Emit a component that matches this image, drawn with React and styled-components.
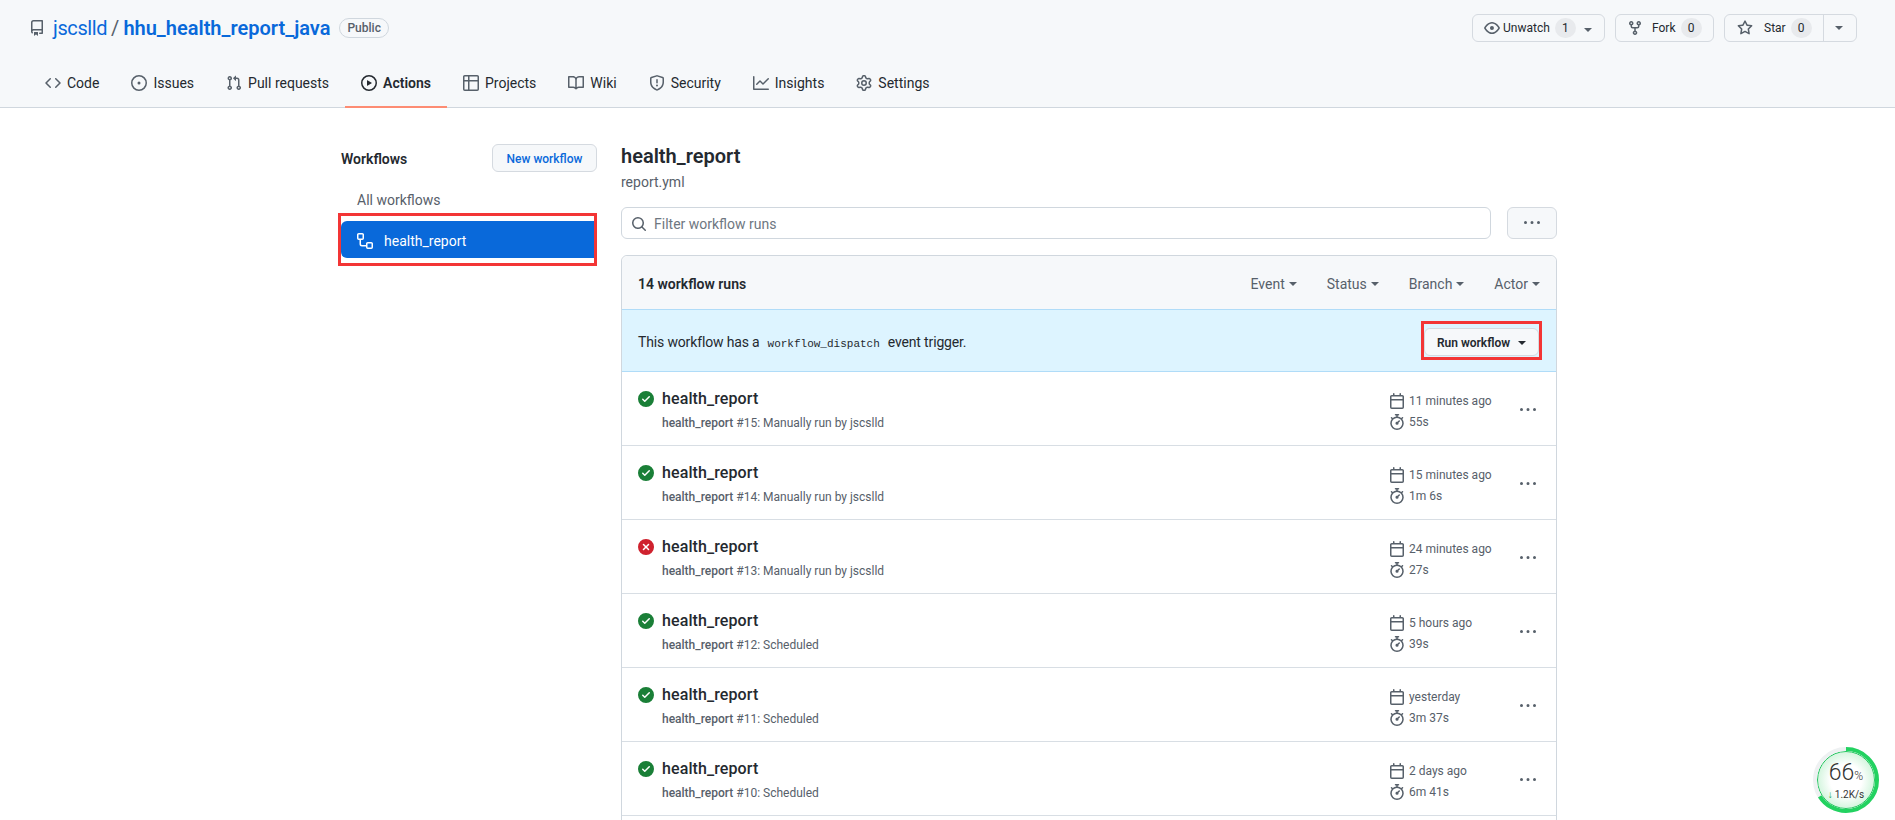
import React from 'react'
import styled, { createGlobalStyle } from 'styled-components'

const GlobalStyle = createGlobalStyle`
  html, body {
    background: #fff;
    height: 820px;
    margin: 0;
    overflow: hidden;
  }

  body {
    color: #24292f;
    font-family: Roboto, 'Liberation Sans', sans-serif;
    font-size: 14px;
  }

  * {
    box-sizing: border-box;
  }
`

const paths = {
  repo: 'M2 2.5A2.5 2.5 0 014.5 0h8.75a.75.75 0 01.75.75v12.5a.75.75 0 01-.75.75h-2.5a.75.75 0 110-1.5h1.75v-2h-8a1 1 0 00-.714 1.7.75.75 0 01-1.072 1.05A2.495 2.495 0 012 11.5v-9zm10.5-1V9h-8c-.356 0-.694.074-1 .208V2.5a1 1 0 011-1h8zM5 12.25v3.25a.25.25 0 00.4.2l1.45-1.087a.25.25 0 01.3 0L8.6 15.7a.25.25 0 00.4-.2v-3.25a.25.25 0 00-.25-.25h-3.5a.25.25 0 00-.25.25z',
  code: 'm11.28 3.22 4.25 4.25a.75.75 0 0 1 0 1.06l-4.25 4.25a.749.749 0 0 1-1.275-.326.749.749 0 0 1 .215-.734L13.94 8l-3.72-3.72a.749.749 0 0 1 .326-1.275.749.749 0 0 1 .734.215Zm-6.56 0a.751.751 0 0 1 1.042.018.751.751 0 0 1 .018 1.042L2.06 8l3.72 3.72a.749.749 0 0 1-.326 1.275.749.749 0 0 1-.734-.215L.47 8.53a.75.75 0 0 1 0-1.06Z',
  issue: 'M8 9.5a1.5 1.5 0 1 0 0-3 1.5 1.5 0 0 0 0 3ZM8 0a8 8 0 1 1 0 16A8 8 0 0 1 8 0ZM1.5 8a6.5 6.5 0 1 0 13 0 6.5 6.5 0 0 0-13 0Z',
  pull: 'M1.5 3.25a2.25 2.25 0 1 1 3 2.122v5.256a2.251 2.251 0 1 1-1.5 0V5.372A2.25 2.25 0 0 1 1.5 3.25Zm5.677-.177L9.573.677A.25.25 0 0 1 10 .854V2.5h1A2.5 2.5 0 0 1 13.5 5v5.628a2.251 2.251 0 1 1-1.5 0V5a1 1 0 0 0-1-1h-1v1.646a.25.25 0 0 1-.427.177L7.177 3.427a.25.25 0 0 1 0-.354ZM3.75 2.5a.75.75 0 1 0 0 1.5.75.75 0 0 0 0-1.5Zm0 9.5a.75.75 0 1 0 0 1.5.75.75 0 0 0 0-1.5Zm8.25.75a.75.75 0 1 0 1.5 0 .75.75 0 0 0-1.5 0Z',
  play: 'M8 0a8 8 0 1 1 0 16A8 8 0 0 1 8 0ZM1.5 8a6.5 6.5 0 1 0 13 0 6.5 6.5 0 0 0-13 0Zm4.879-2.773 4.264 2.559a.25.25 0 0 1 0 .428l-4.264 2.559A.25.25 0 0 1 6 10.559V5.442a.25.25 0 0 1 .379-.215Z',
  table: 'M0 1.75C0 .784.784 0 1.75 0h12.5C15.216 0 16 .784 16 1.75v12.5A1.75 1.75 0 0 1 14.25 16H1.75A1.75 1.75 0 0 1 0 14.25ZM6.5 6.5v8h7.75a.25.25 0 0 0 .25-.25V6.5Zm8-1.5V1.75a.25.25 0 0 0-.25-.25H6.5V5Zm-13 1.5v7.75c0 .138.112.25.25.25H5v-8ZM5 5V1.5H1.75a.25.25 0 0 0-.25.25V5Z',
  book: 'M0 1.75A.75.75 0 0 1 .75 1h4.253c1.227 0 2.317.59 3 1.501A3.743 3.743 0 0 1 11.006 1h4.245a.75.75 0 0 1 .75.75v10.5a.75.75 0 0 1-.75.75h-4.507a2.25 2.25 0 0 0-1.591.659l-.622.621a.75.75 0 0 1-1.06 0l-.622-.621A2.25 2.25 0 0 0 5.258 13H.75a.75.75 0 0 1-.75-.75Zm7.251 10.324.004-5.073-.002-2.253A2.25 2.25 0 0 0 5.003 2.5H1.5v9h3.757a3.75 3.75 0 0 1 1.994.574ZM8.755 4.75l-.004 7.322a3.752 3.752 0 0 1 1.992-.572H14.5v-9h-3.495a2.25 2.25 0 0 0-2.25 2.25Z',
  shield: 'M7.467.133a1.748 1.748 0 0 1 1.066 0l5.25 1.68A1.75 1.75 0 0 1 15 3.48V7c0 1.566-.32 3.182-1.303 4.682-.983 1.498-2.585 2.813-5.032 3.855a1.697 1.697 0 0 1-1.33 0c-2.447-1.042-4.049-2.357-5.032-3.855C1.32 10.182 1 8.566 1 7V3.48a1.75 1.75 0 0 1 1.217-1.667Zm.61 1.429a.25.25 0 0 0-.153 0l-5.25 1.68a.25.25 0 0 0-.174.238V7c0 1.358.275 2.666 1.057 3.86.784 1.194 2.121 2.34 4.366 3.297a.196.196 0 0 0 .154 0c2.245-.956 3.582-2.104 4.366-3.298C13.225 9.666 13.5 8.36 13.5 7V3.48a.251.251 0 0 0-.174-.237l-5.25-1.68ZM8.75 4.75v3a.75.75 0 0 1-1.5 0v-3a.75.75 0 0 1 1.5 0ZM9 10.5a1 1 0 1 1-2 0 1 1 0 0 1 2 0Z',
  graph: 'M1.5 1.75V13.5h13.75a.75.75 0 0 1 0 1.5H.75a.75.75 0 0 1-.75-.75V1.75a.75.75 0 0 1 1.5 0Zm14.28 2.53-5.25 5.25a.75.75 0 0 1-1.06 0L7 7.06 4.28 9.78a.751.751 0 0 1-1.042-.018.751.751 0 0 1-.018-1.042l3.25-3.25a.75.75 0 0 1 1.06 0L10 7.94l4.72-4.72a.751.751 0 0 1 1.042.018.751.751 0 0 1 .018 1.042Z',
  gear: 'M8 0a8.2 8.2 0 0 1 .701.031C9.444.095 9.99.645 10.16 1.29l.288 1.107c.018.066.079.158.212.224.231.114.454.243.668.386.123.082.233.09.299.071l1.103-.303c.644-.176 1.392.021 1.82.63.27.385.506.792.704 1.218.315.675.111 1.422-.364 1.891l-.814.806c-.049.048-.098.147-.088.294.016.257.016.515 0 .772-.01.147.038.246.088.294l.814.806c.475.469.679 1.216.364 1.891a7.977 7.977 0 0 1-.704 1.217c-.428.61-1.176.807-1.82.63l-1.102-.302c-.067-.019-.177-.011-.3.071a5.909 5.909 0 0 1-.668.386c-.133.066-.194.158-.211.224l-.29 1.106c-.168.646-.715 1.196-1.458 1.26a8.006 8.006 0 0 1-1.402 0c-.743-.064-1.289-.614-1.458-1.26l-.289-1.106c-.018-.066-.079-.158-.212-.224a5.738 5.738 0 0 1-.668-.386c-.123-.082-.233-.09-.299-.071l-1.103.303c-.644.176-1.392-.021-1.82-.63a8.12 8.12 0 0 1-.704-1.218c-.315-.675-.111-1.422.363-1.891l.815-.806c.05-.048.098-.147.088-.294a6.214 6.214 0 0 1 0-.772c.01-.147-.038-.246-.088-.294l-.815-.806C.635 6.045.431 5.298.746 4.623a7.92 7.92 0 0 1 .704-1.217c.428-.61 1.176-.807 1.82-.63l1.102.302c.067.019.177.011.3-.071.214-.143.437-.272.668-.386.133-.066.194-.158.211-.224l.29-1.106C6.009.645 6.556.095 7.299.03 7.53.01 7.764 0 8 0Zm-.571 1.525c-.036.003-.108.036-.137.146l-.289 1.105c-.147.561-.549.967-.998 1.189-.173.086-.34.183-.5.29-.417.278-.97.423-1.529.27l-1.103-.303c-.109-.03-.175.016-.195.045-.22.312-.412.644-.573.99-.014.031-.021.11.059.19l.815.806c.411.406.562.957.53 1.456a4.709 4.709 0 0 0 0 .582c.032.499-.119 1.05-.53 1.456l-.815.806c-.081.08-.073.159-.059.19.162.346.353.677.573.989.02.03.085.076.195.046l1.102-.303c.56-.153 1.113-.008 1.53.27.161.107.328.204.501.29.447.222.85.629.997 1.189l.289 1.105c.029.109.101.143.137.146a6.6 6.6 0 0 0 1.142 0c.036-.003.108-.036.137-.146l.289-1.105c.147-.561.549-.967.998-1.189.173-.086.34-.183.5-.29.417-.278.97-.423 1.529-.27l1.103.303c.109.029.175-.016.195-.045.22-.313.411-.644.573-.99.014-.031.021-.11-.059-.19l-.815-.806c-.411-.406-.562-.957-.53-1.456a4.709 4.709 0 0 0 0-.582c-.032-.499.119-1.05.53-1.456l.815-.806c.081-.08.073-.159.059-.19a6.464 6.464 0 0 0-.573-.989c-.02-.03-.085-.076-.195-.046l-1.102.303c-.56.153-1.113.008-1.53-.27a4.44 4.44 0 0 0-.501-.29c-.447-.222-.85-.629-.997-1.189l-.289-1.105c-.029-.11-.101-.143-.137-.146a6.6 6.6 0 0 0-1.142 0ZM11 8a3 3 0 1 1-6 0 3 3 0 0 1 6 0ZM9.5 8a1.5 1.5 0 1 0-3.001.001A1.5 1.5 0 0 0 9.5 8Z',
  eye: 'M8 2c1.981 0 3.671.992 4.933 2.078 1.27 1.091 2.187 2.345 2.637 3.023a1.62 1.62 0 0 1 0 1.798c-.45.678-1.367 1.932-2.637 3.023C11.67 13.008 9.981 14 8 14c-1.981 0-3.671-.992-4.933-2.078C1.797 10.83.88 9.576.43 8.898a1.62 1.62 0 0 1 0-1.798c.45-.677 1.367-1.931 2.637-3.022C4.33 2.992 6.019 2 8 2ZM1.679 7.932a.12.12 0 0 0 0 .136c.411.622 1.241 1.75 2.366 2.717C5.176 11.758 6.527 12.5 8 12.5c1.473 0 2.825-.742 3.955-1.715 1.124-.967 1.954-2.096 2.366-2.717a.12.12 0 0 0 0-.136c-.412-.621-1.242-1.75-2.366-2.717C10.824 4.242 9.473 3.5 8 3.5c-1.473 0-2.825.742-3.955 1.715-1.124.967-1.954 2.096-2.366 2.717ZM8 10a2 2 0 1 1-.001-3.999A2 2 0 0 1 8 10Z',
  fork: 'M5 5.372v.878c0 .414.336.75.75.75h4.5a.75.75 0 0 0 .75-.75v-.878a2.25 2.25 0 1 1 1.5 0v.878a2.25 2.25 0 0 1-2.25 2.25h-1.5v2.128a2.251 2.251 0 1 1-1.5 0V8.5h-1.5A2.25 2.25 0 0 1 3.5 6.25v-.878a2.25 2.25 0 1 1 1.5 0ZM5 3.25a.75.75 0 1 0-1.5 0 .75.75 0 0 0 1.5 0Zm6.75.75a.75.75 0 1 0 0-1.5.75.75 0 0 0 0 1.5Zm-3 8.75a.75.75 0 1 0-1.5 0 .75.75 0 0 0 1.5 0Z',
  star: 'M8 .25a.75.75 0 0 1 .673.418l1.882 3.815 4.21.612a.75.75 0 0 1 .416 1.279l-3.046 2.97.719 4.192a.751.751 0 0 1-1.088.791L8 12.347l-3.766 1.98a.75.75 0 0 1-1.088-.79l.72-4.194L.818 6.374a.75.75 0 0 1 .416-1.28l4.21-.611L7.327.668A.75.75 0 0 1 8 .25Zm0 2.445L6.615 5.5a.75.75 0 0 1-.564.41l-3.097.45 2.24 2.184a.75.75 0 0 1 .216.664l-.528 3.084 2.769-1.456a.75.75 0 0 1 .698 0l2.77 1.456-.53-3.084a.75.75 0 0 1 .216-.664l2.24-2.183-3.096-.45a.75.75 0 0 1-.564-.41L8 2.694Z',
  search: 'M10.68 11.74a6 6 0 0 1-7.922-8.982 6 6 0 0 1 8.982 7.922l3.04 3.04a.749.749 0 0 1-.326 1.275.749.749 0 0 1-.734-.215ZM11.5 7a4.499 4.499 0 1 0-8.997 0A4.499 4.499 0 0 0 11.5 7Z',
  workflow: 'M0 1.75C0 .784.784 0 1.75 0h3.5C6.216 0 7 .784 7 1.75v3.5A1.75 1.75 0 0 1 5.25 7H4v4a1 1 0 0 0 1 1h4v-1.25C9 9.784 9.784 9 10.75 9h3.5c.966 0 1.75.784 1.75 1.75v3.5A1.75 1.75 0 0 1 14.25 16h-3.5A1.75 1.75 0 0 1 9 14.25v-.75H5A2.5 2.5 0 0 1 2.5 11V7h-.75A1.75 1.75 0 0 1 0 5.25Zm1.75-.25a.25.25 0 0 0-.25.25v3.5c0 .138.112.25.25.25h3.5a.25.25 0 0 0 .25-.25v-3.5a.25.25 0 0 0-.25-.25Zm9 9a.25.25 0 0 0-.25.25v3.5c0 .138.112.25.25.25h3.5a.25.25 0 0 0 .25-.25v-3.5a.25.25 0 0 0-.25-.25Z',
  success: 'M8 16A8 8 0 1 1 8 0a8 8 0 0 1 0 16Zm3.78-9.72a.751.751 0 0 0-.018-1.042.751.751 0 0 0-1.042-.018L6.75 9.19 5.28 7.72a.751.751 0 0 0-1.042.018.751.751 0 0 0-.018 1.042l2 2a.75.75 0 0 0 1.06 0Z',
  failure: 'M2.343 13.657A8 8 0 1 1 13.658 2.343 8 8 0 0 1 2.343 13.657ZM6.03 4.97a.751.751 0 0 0-1.042.018.751.751 0 0 0-.018 1.042L6.94 8 4.97 9.97a.749.749 0 0 0 .326 1.275.749.749 0 0 0 .734-.215L8 9.06l1.97 1.97a.749.749 0 0 0 1.275-.326.749.749 0 0 0-.215-.734L9.06 8l1.97-1.97a.749.749 0 0 0-.326-1.275.749.749 0 0 0-.734.215L8 6.94Z',
  calendar: 'M4.75 0a.75.75 0 0 1 .75.75V2h5V.75a.75.75 0 0 1 1.5 0V2h1.25c.966 0 1.75.784 1.75 1.75v10.5A1.75 1.75 0 0 1 13.25 16H2.75A1.75 1.75 0 0 1 1 14.25V3.75C1 2.784 1.784 2 2.75 2H4V.75A.75.75 0 0 1 4.75 0ZM2.5 7.5v6.75c0 .138.112.25.25.25h10.5a.25.25 0 0 0 .25-.25V7.5Zm10.75-4H2.75a.25.25 0 0 0-.25.25V6h11V3.75a.25.25 0 0 0-.25-.25Z',
  stopwatch: 'M5.75.75A.75.75 0 0 1 6.5 0h3a.75.75 0 0 1 0 1.5h-.75v1l-.001.041a6.724 6.724 0 0 1 3.464 1.435l.007-.006.75-.75a.749.749 0 0 1 1.275.326.749.749 0 0 1-.215.734l-.75.75-.006.007a6.75 6.75 0 1 1-10.548 0L2.72 5.03l-.75-.75a.751.751 0 0 1 .018-1.042.751.751 0 0 1 1.042-.018l.75.75.007.006A6.72 6.72 0 0 1 7.25 2.541V1.5H6.5a.75.75 0 0 1-.75-.75ZM8 14.5a5.25 5.25 0 1 0-.001-10.501A5.25 5.25 0 0 0 8 14.5Zm.389-6.7 1.33-1.33a.75.75 0 1 1 1.061 1.06L9.45 8.861A1.503 1.503 0 0 1 8 10.75a1.499 1.499 0 1 1 .389-2.95Z',
  kebab: 'M8 9a1.5 1.5 0 1 0 0-3 1.5 1.5 0 0 0 0 3ZM1.5 9a1.5 1.5 0 1 0 0-3 1.5 1.5 0 0 0 0 3Zm13 0a1.5 1.5 0 1 0 0-3 1.5 1.5 0 0 0 0 3Z',
}

const IconSvg = styled.svg`
  color: ${(p) => p.$color || '#57606a'};
  display: block;
  fill: currentColor;
  flex: none;
`

function Icon({ name, size = 16, color }) {
  return (
    <IconSvg $color={color} height={size} viewBox="0 0 16 16" width={size}>
      <path d={paths[name]} fillRule="evenodd" />
    </IconSvg>
  )
}

const Caret = styled.span`
  border-left: 4px solid transparent;
  border-right: 4px solid transparent;
  border-top: 4px solid ${(p) => p.$color || '#57606a'};
  display: inline-block;
  flex: none;
  height: 0;
  width: 0;
`

const RepoHead = styled.header`
  background: #f6f8fa;
  border-bottom: 1px solid #d0d7de;
  height: 108px;
`

const TitleBar = styled.div`
  align-items: center;
  display: flex;
  height: 55px;
  justify-content: space-between;
  padding: 0 38px 0 29px;
`

const RepoTitle = styled.div`
  align-items: center;
  display: flex;
  font-size: 20px;
`

const Owner = styled.a`
  color: #0969da;
  letter-spacing: -0.4px;
  margin-left: 8px;
`

const Slash = styled.span`
  color: #57606a;
  margin: 0 4px;
`

const RepoName = styled.a`
  color: #0969da;
  font-weight: 600;
`

const Label = styled.span`
  border: 1px solid #d0d7de;
  border-radius: 12px;
  color: #57606a;
  font-size: 12px;
  font-weight: 500;
  line-height: 18px;
  margin-left: 9px;
  padding: 0 7px;
`

const Actions = styled.div`
  align-items: center;
  display: flex;
  gap: 10px;
`

const ActionButton = styled.div`
  align-items: center;
  background: #f6f8fa;
  border: 1px solid #d5dae0;
  border-radius: 6px;
  display: flex;
  font-size: 12px;
  height: 28px;
  padding: 0 0 0 ${(p) => p.$pad}px;
  width: ${(p) => p.$width}px;
`

const Counter = styled.span`
  background: #e8eaed;
  border-radius: 10px;
  line-height: 20px;
  margin-left: 5px;
  text-align: center;
  width: 21px;
`

const ActionText = styled.span`
  margin-left: ${(p) => p.$gap}px;
`

const StarSplit = styled.span`
  align-items: center;
  align-self: stretch;
  border-left: 1px solid #d5dae0;
  display: flex;
  justify-content: center;
  margin-left: 11px;
  width: 32px;
`

const Tabs = styled.nav`
  display: flex;
  height: 53px;
  padding-left: 29px;
`

const Tab = styled.a`
  align-items: center;
  border-bottom: 2px solid ${(p) => (p.$active ? '#fd8c73' : 'transparent')};
  color: #24292f;
  display: flex;
  font-weight: ${(p) => (p.$active ? 600 : 400)};
  gap: 6px;
  padding: 5px 16px 0;
`

const Layout = styled.main`
  display: grid;
  gap: 24px;
  grid-template-columns: 256px 936px;
  padding: 36px 0 0 341px;
`

const SideHead = styled.div`
  align-items: center;
  display: flex;
  height: 28px;
  justify-content: space-between;
`

const SideTitle = styled.h2`
  font-size: 14px;
  font-weight: 600;
  margin: 0;
  padding-top: 2px;
`

const NewButton = styled.a`
  align-items: center;
  background: #f6f8fa;
  border: 1px solid #d5dae0;
  border-radius: 6px;
  color: #0969da;
  display: flex;
  font-size: 12px;
  font-weight: 500;
  height: 28px;
  justify-content: center;
  padding-top: 2px;
  width: 105px;
`

const AllLink = styled.a`
  color: #57606a;
  display: block;
  line-height: 20px;
  margin-top: 18px;
  padding-left: 16px;
`

const SideMark = styled.div`
  border: 3px solid #f33535;
  margin: 3px 0 0 -3px;
  padding: 5px 0 5px;
  width: 259px;
`

const SideItem = styled.a`
  align-items: center;
  background: #0969da;
  border-radius: 6px 0 0 6px;
  color: #fff;
  display: flex;
  gap: 11px;
  height: 37px;
  padding: 2px 0 0 16px;
`

const Heading = styled.h1`
  font-size: 20px;
  font-weight: 600;
  line-height: 26px;
  margin: -1px 0 0;
`

const SubHeading = styled.div`
  color: #57606a;
  line-height: 20px;
  margin-top: 3px;
`

const FilterRow = styled.div`
  display: flex;
  gap: 16px;
  margin-top: 15px;
`

const FilterBox = styled.div`
  align-items: center;
  border: 1px solid #d0d7de;
  border-radius: 6px;
  color: #6e7781;
  display: flex;
  flex: 1;
  gap: 7px;
  height: 32px;
  padding: 2px 0 0 9px;
`

const MoreButton = styled.div`
  align-items: center;
  background: #f6f8fa;
  border: 1px solid #d5dae0;
  border-radius: 6px;
  display: flex;
  height: 32px;
  justify-content: center;
  width: 50px;
`

const RunsBox = styled.section`
  border: 1px solid #d0d7de;
  border-radius: 6px 6px 0 0;
  margin-top: 16px;
`

const RunsHead = styled.div`
  align-items: center;
  background: #f6f8fa;
  border-radius: 6px 6px 0 0;
  display: flex;
  height: 53px;
  justify-content: space-between;
  padding: 2px 16px 0;
`

const RunCount = styled.span`
  font-weight: 600;
`

const Filters = styled.div`
  display: flex;
  gap: 30px;
`

const FilterMenu = styled.span`
  align-items: center;
  color: #57606a;
  display: flex;
  gap: 4px;
`

const Banner = styled.div`
  align-items: center;
  background: #ddf4ff;
  border-bottom: 1px solid #b0dcf8;
  border-top: 1px solid #b0dcf8;
  display: flex;
  height: 63px;
  justify-content: space-between;
  padding: 0 14px 0 16px;
`

const BannerText = styled.span`
  letter-spacing: -0.15px;
  padding-top: 2px;
`

const Mono = styled.code`
  font-family: 'Liberation Mono', monospace;
  font-size: 11px;
  letter-spacing: 0;
  margin: 0 8px;
`

const RunMark = styled.div`
  border: 3px solid #f33535;
  height: 39px;
  padding-top: 4px;
  width: 121px;
`

const RunButton = styled.div`
  align-items: center;
  background: #f6f8fa;
  border: 1px solid #d5dae0;
  border-radius: 6px;
  display: flex;
  font-size: 12px;
  font-weight: 600;
  gap: 8px;
  height: 28px;
  justify-content: center;
  padding-top: 2px;
`

const Row = styled.article`
  align-items: center;
  border-bottom: 1px solid #d8dee4;
  display: grid;
  grid-template-columns: 24px 1fr 121px 46px;
  height: 74px;
  padding-left: 16px;
`

const StatusCell = styled.div`
  align-self: start;
  padding-top: 19px;
`

const RunText = styled.div`
  padding-top: 2px;
`

const RunTitle = styled.div`
  font-size: 16px;
  font-weight: 500;
  letter-spacing: 0.1px;
  line-height: 22px;
`

const RunMeta = styled.div`
  color: #57606a;
  font-size: 12px;
  line-height: 18px;
  margin-top: 4px;

  b {
    font-weight: 500;
  }
`

const When = styled.div`
  display: grid;
  gap: 5px;
  padding-top: 5px;
`

const WhenLine = styled.div`
  align-items: center;
  color: #57606a;
  display: flex;
  font-size: 12px;
  gap: 4px;
`

const RowMenu = styled.div`
  padding: 2px 0 0 10px;
`

const SpeedWidget = styled.div`
  bottom: 7px;
  height: 66px;
  position: absolute;
  right: 16px;
  width: 66px;
`

const SpeedRing = styled.svg`
  display: block;
`

const SpeedText = styled.div`
  align-items: center;
  color: #333;
  display: flex;
  flex-direction: column;
  inset: 0;
  justify-content: center;
  padding-top: 2px;
  position: absolute;
`

const SpeedValue = styled.div`
  font-size: 23px;
  font-weight: 300;
  line-height: 24px;

  small {
    font-size: 12px;
  }
`

const SpeedRate = styled.div`
  font-size: 10px;
  line-height: 13px;

  i {
    color: #16a34a;
    font-style: normal;
    font-weight: 700;
    margin-right: 2px;
  }
`

const tabs = [
  ['code', 'Code'],
  ['issue', 'Issues'],
  ['pull', 'Pull requests'],
  ['play', 'Actions', true],
  ['table', 'Projects'],
  ['book', 'Wiki'],
  ['shield', 'Security'],
  ['graph', 'Insights'],
  ['gear', 'Settings'],
]

const runs = [
  { id: 15, by: 'Manually run by jscslld', when: '11 minutes ago', took: '55s' },
  { id: 14, by: 'Manually run by jscslld', when: '15 minutes ago', took: '1m 6s' },
  { id: 13, by: 'Manually run by jscslld', when: '24 minutes ago', took: '27s', failed: true },
  { id: 12, by: 'Scheduled', when: '5 hours ago', took: '39s' },
  { id: 11, by: 'Scheduled', when: 'yesterday', took: '3m 37s' },
  { id: 10, by: 'Scheduled', when: '2 days ago', took: '6m 41s' },
]

function App() {
  return (
    <>
      <GlobalStyle />
      <RepoHead>
        <TitleBar>
          <RepoTitle>
            <Icon name="repo" />
            <Owner>jscslld</Owner>
            <Slash>/</Slash>
            <RepoName>hhu_health_report_java</RepoName>
            <Label>Public</Label>
          </RepoTitle>
          <Actions>
            <ActionButton $width={133} $pad={11}>
              <Icon name="eye" />
              <ActionText $gap={3}>Unwatch</ActionText>
              <Counter>1</Counter>
              <ActionText $gap={8}><Caret /></ActionText>
            </ActionButton>
            <ActionButton $width={99} $pad={11}>
              <Icon name="fork" />
              <ActionText $gap={9}>Fork</ActionText>
              <Counter>0</Counter>
            </ActionButton>
            <ActionButton $width={133} $pad={12}>
              <Icon name="star" />
              <ActionText $gap={11}>Star</ActionText>
              <Counter>0</Counter>
              <StarSplit><Caret /></StarSplit>
            </ActionButton>
          </Actions>
        </TitleBar>
        <Tabs>
          {tabs.map(([icon, label, active]) => (
            <Tab key={label} $active={active}>
              <Icon name={icon} color={active ? '#24292f' : '#57606a'} />
              {label}
            </Tab>
          ))}
        </Tabs>
      </RepoHead>

      <Layout>
        <aside>
          <SideHead>
            <SideTitle>Workflows</SideTitle>
            <NewButton>New workflow</NewButton>
          </SideHead>
          <AllLink>All workflows</AllLink>
          <SideMark>
            <SideItem>
              <Icon name="workflow" color="#fff" />
              health_report
            </SideItem>
          </SideMark>
        </aside>

        <section>
          <Heading>health_report</Heading>
          <SubHeading>report.yml</SubHeading>
          <FilterRow>
            <FilterBox>
              <Icon name="search" />
              Filter workflow runs
            </FilterBox>
            <MoreButton><Icon name="kebab" /></MoreButton>
          </FilterRow>

          <RunsBox>
            <RunsHead>
              <RunCount>14 workflow runs</RunCount>
              <Filters>
                {['Event', 'Status', 'Branch', 'Actor'].map((f) => (
                  <FilterMenu key={f}>{f} <Caret /></FilterMenu>
                ))}
              </Filters>
            </RunsHead>
            <Banner>
              <BannerText>This workflow has a<Mono>workflow_dispatch</Mono>event trigger.</BannerText>
              <RunMark>
                <RunButton>Run workflow <Caret $color="#24292f" /></RunButton>
              </RunMark>
            </Banner>
            {runs.map((run) => (
              <Row key={run.id}>
                <StatusCell>
                  <Icon
                    name={run.failed ? 'failure' : 'success'}
                    color={run.failed ? '#cf222e' : '#1a7f37'}
                  />
                </StatusCell>
                <RunText>
                  <RunTitle>health_report</RunTitle>
                  <RunMeta><b>health_report</b> #{run.id}: {run.by}</RunMeta>
                </RunText>
                <When>
                  <WhenLine><Icon name="calendar" />{run.when}</WhenLine>
                  <WhenLine><Icon name="stopwatch" />{run.took}</WhenLine>
                </When>
                <RowMenu><Icon name="kebab" /></RowMenu>
              </Row>
            ))}
            <Row />
          </RunsBox>
        </section>
      </Layout>

      <SpeedWidget>
        <SpeedRing height="66" viewBox="0 0 66 66" width="66">
          <defs>
            <radialGradient id="speedFill">
              <stop offset="55%" stopColor="#fff" />
              <stop offset="100%" stopColor="#d4f5de" />
            </radialGradient>
          </defs>
          <circle cx="33" cy="33" fill="url(#speedFill)" r="28.5" stroke="#22c55e" strokeWidth="1" />
          <circle cx="33" cy="33" fill="none" r="31" stroke="#eef1f2" strokeWidth="4" />
          <circle
            cx="33"
            cy="33"
            fill="none"
            r="31"
            stroke="#22d260"
            strokeDasharray="128.6 66.2"
            strokeWidth="4"
            transform="rotate(-90 33 33)"
          />
        </SpeedRing>
        <SpeedText>
          <SpeedValue>66<small>%</small></SpeedValue>
          <SpeedRate><i>↓</i>1.2K/s</SpeedRate>
        </SpeedText>
      </SpeedWidget>
    </>
  )
}

export default App
